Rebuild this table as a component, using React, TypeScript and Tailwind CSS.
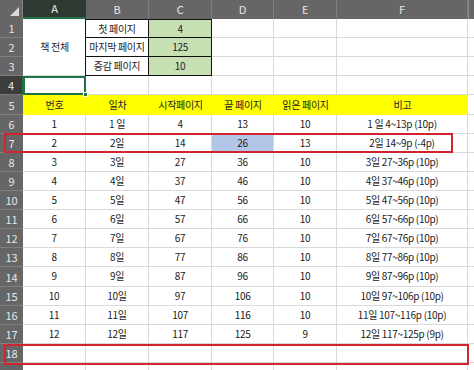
import React from "react";

const cols = ["A", "B", "C", "D", "E", "F"];

type Row = [string, string, string, string, string, string];

const data: Row[] = [
  ["1", "1 일", "4", "13", "10", "1 일 4~13p (10p)"],
  ["2", "2일", "14", "26", "13", "2일 14~9p (-4p)"],
  ["3", "3일", "27", "36", "10", "3일 27~36p (10p)"],
  ["4", "4일", "37", "46", "10", "4일 37~46p (10p)"],
  ["5", "5일", "47", "56", "10", "5일 47~56p (10p)"],
  ["6", "6일", "57", "66", "10", "6일 57~66p (10p)"],
  ["7", "7일", "67", "76", "10", "7일 67~76p (10p)"],
  ["8", "8일", "77", "86", "10", "8일 77~86p (10p)"],
  ["9", "9일", "87", "96", "10", "9일 87~96p (10p)"],
  ["10", "10일", "97", "106", "10", "10일 97~106p (10p)"],
  ["11", "11일", "107", "116", "10", "11일 107~116p (10p)"],
  ["12", "12일", "117", "125", "9", "12일 117~125p (9p)"],
];

const cell =
  "flex items-center justify-center border-r border-b border-[#d9d9d9] bg-white whitespace-nowrap overflow-hidden";

function RowHead({ n, dark }: { n?: number; dark?: boolean }) {
  return (
    <div
      className={
        dark
          ? "flex items-end justify-center pb-[3px] bg-[#3c3c3c] text-[#f0f0f0] text-[11px] tracking-normal border-b border-[#7a7a7a] border-r border-r-[#217346]"
          : "flex items-end justify-center pb-[3px] bg-[#666666] text-[#e6e6e6] text-[11px] tracking-normal border-b border-[#808080]"
      }
    >
      {n}
    </div>
  );
}

export default function App() {
  const body: React.ReactNode[] = [];

  body.push(
    <div key="corner" className="relative bg-[#666666] border-r border-[#808080]">
      <div className="absolute right-[3px] bottom-[3px] w-0 h-0 border-l-[9px] border-l-transparent border-b-[9px] border-b-[#d8d8d8]" />
    </div>
  );
  cols.forEach((c) => {
    body.push(
      <div
        key={"h" + c}
        className={
          c === "A"
            ? "flex items-center justify-center bg-[#2f3a33] text-[#f0f0f0] text-[11px] border-b-2 border-[#217346]"
            : "flex items-center justify-center bg-[#666666] text-[#e6e6e6] text-[11px] border-r border-[#7e7e7e]"
        }
      >
        {c}
      </div>
    );
  });
  body.push(<div key="hG" className="bg-[#666666] border-l border-[#8a8a8a]" />);

  const top: [string, string][] = [
    ["첫 페이지", "4"],
    ["마지막 페이지", "125"],
    ["증감 페이지", "10"],
  ];
  top.forEach(([label, val], i) => {
    body.push(<RowHead key={"rh" + (i + 1)} n={i + 1} />);
    if (i === 0) {
      body.push(
        <div
          key="merged"
          className="row-span-3 flex items-center justify-center bg-white border-b border-[#d9d9d9] text-[#222]"
        >
          책 전체
        </div>
      );
    }
    body.push(
      <div
        key={"b" + i}
        className="flex items-center justify-center bg-white border border-[#111] -ml-px text-[#222] whitespace-nowrap"
        style={{ marginTop: i === 0 ? 0 : -1 }}
      >
        {label}
      </div>
    );
    body.push(
      <div
        key={"c" + i}
        className="flex items-center justify-center bg-[#c6e0b4] border-r border-b border-[#111] text-[#222]"
        style={i === 0 ? { borderTop: "1px solid #111" } : undefined}
      >
        {val}
      </div>
    );
    body.push(<div key={"d" + i} className={cell} />);
    body.push(<div key={"e" + i} className={cell} />);
    body.push(<div key={"f" + i} className={cell} />);
    body.push(<div key={"g" + i} className="bg-white border-b border-[#d9d9d9]" />);
  });

  body.push(<RowHead key="rh4" n={4} dark />);
  body.push(
    <div key="a4" className="relative bg-white border-2 border-[#217346]">
      <div className="absolute -right-[4px] -bottom-[4px] w-[5px] h-[5px] bg-[#217346] border border-white" />
    </div>
  );
  for (let k = 0; k < 5; k++) body.push(<div key={"r4" + k} className={cell} />);
  body.push(<div key="r4g" className="bg-white border-b border-[#d9d9d9]" />);

  body.push(<RowHead key="rh5" n={5} />);
  ["번호", "일차", "시작페이지", "끝 페이지", "읽은 페이지", "비고"].forEach((t, k) => {
    body.push(
      <div key={"y" + k} className="flex items-center justify-center bg-[#ffff00] text-[#222] whitespace-nowrap">
        {t}
      </div>
    );
  });
  body.push(<div key="r5g" className="bg-white border-b border-[#d9d9d9]" />);

  data.forEach((r, i) => {
    const n = i + 6;
    body.push(<RowHead key={"rh" + n} n={n} />);
    r.forEach((v, k) => {
      const blue = n === 7 && k === 3;
      body.push(
        <div
          key={"d" + n + "-" + k}
          className={
            blue
              ? "flex items-center justify-center border-r border-b border-[#d9d9d9] bg-[#b4c6e7] whitespace-nowrap"
              : cell
          }
        >
          {v}
        </div>
      );
    });
    body.push(<div key={"g" + n} className="bg-white border-b border-[#d9d9d9]" />);
  });

  body.push(<RowHead key="rh18" n={18} />);
  for (let k = 0; k < 6; k++) body.push(<div key={"r18" + k} className={cell} />);
  body.push(<div key="r18g" className="bg-white border-b border-[#d9d9d9]" />);

  body.push(<RowHead key="rh19" />);
  for (let k = 0; k < 6; k++) body.push(<div key={"r19" + k} className={cell} />);
  body.push(<div key="r19g" className="bg-white" />);

  return (
    <div
      className="relative w-[474px] h-[370px] overflow-hidden bg-white text-[10px] tracking-[-0.3px] leading-none text-[#1a1a1a]"
      style={{ fontFamily: '"Noto Sans CJK KR", "Noto Sans", sans-serif' }}
    >
      <div className="grid grid-cols-[23px_63px_63px_63px_62px_63px_131px_6px] grid-rows-[19px_repeat(19,19.12px)]">
        {body}
      </div>
      <div className="absolute left-[4px] top-[133px] w-[449px] h-[20px] border-2 border-[#d0252f] pointer-events-none" />
      <div className="absolute left-[4px] top-[344px] w-[465px] h-[21px] border-2 border-[#d0252f] pointer-events-none" />
    </div>
  );
}
